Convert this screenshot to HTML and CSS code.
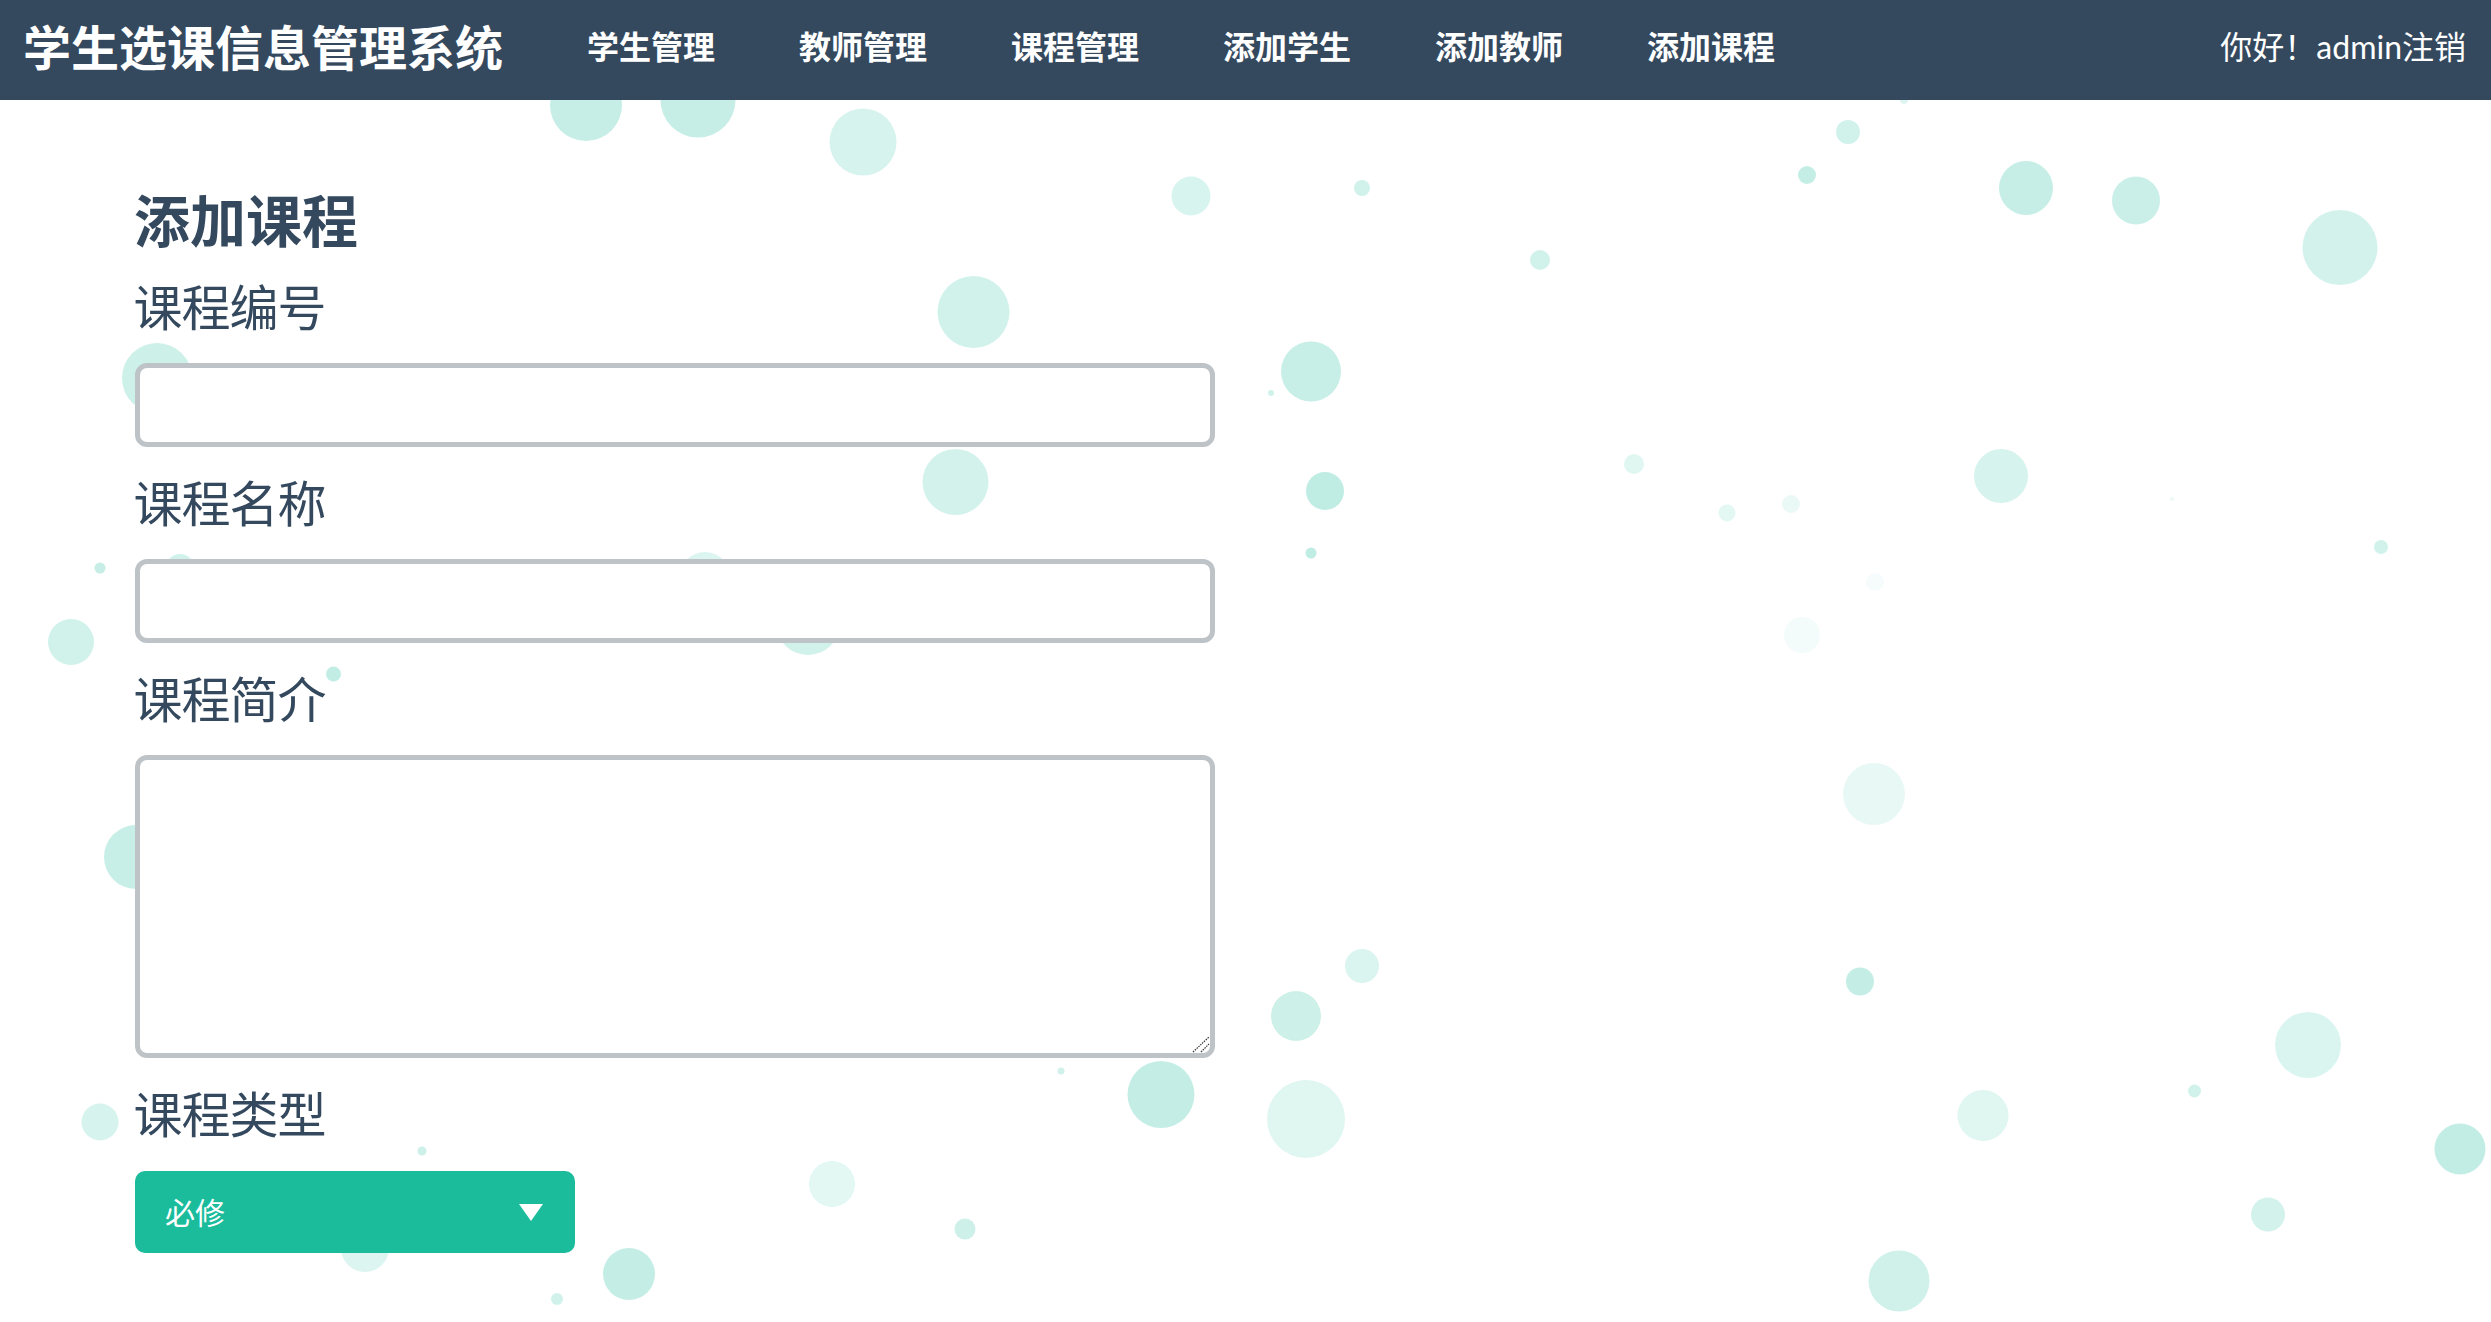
FILE: index.html
```html
<!DOCTYPE html>
<html lang="zh-CN">
<head>
<meta charset="utf-8">
<title>学生选课信息管理系统</title>
<link rel="stylesheet" href="styles.css">
</head>
<body>
<svg class="bubbles" viewBox="0 0 2491 1322" width="2491" height="1322" aria-hidden="true">
  <g fill="#1abc9c">
    <circle cx="586" cy="105" r="36" opacity=".25"/>
    <circle cx="698" cy="100" r="37.5" opacity=".25"/>
    <circle cx="863" cy="142" r="33.5" opacity=".18"/>
    <circle cx="973.5" cy="312" r="36" opacity=".2"/>
    <circle cx="157" cy="378" r="35" opacity=".22"/>
    <circle cx="955.5" cy="482" r="33" opacity=".19"/>
    <circle cx="100" cy="568" r="5.5" opacity=".25"/>
    <circle cx="180" cy="568" r="14" opacity=".2"/>
    <circle cx="705" cy="578" r="26" opacity=".15"/>
    <circle cx="71" cy="642" r="23" opacity=".2"/>
    <circle cx="808" cy="623" r="32" opacity=".2"/>
    <circle cx="333.5" cy="674" r="7.5" opacity=".27"/>
    <circle cx="136" cy="857" r="32" opacity=".24"/>
    <circle cx="100" cy="1122" r="18.5" opacity=".18"/>
    <circle cx="422" cy="1151" r="4.5" opacity=".22"/>
    <circle cx="832" cy="1184" r="23" opacity=".12"/>
    <circle cx="965" cy="1229" r="10.5" opacity=".22"/>
    <circle cx="365" cy="1248" r="24" opacity=".15"/>
    <circle cx="629" cy="1274" r="26" opacity=".26"/>
    <circle cx="557" cy="1299" r="6" opacity=".2"/>
    <circle cx="1191" cy="196" r="19.5" opacity=".17"/>
    <circle cx="1362" cy="188" r="8" opacity=".2"/>
    <circle cx="1540" cy="260" r="10" opacity=".2"/>
    <circle cx="1807" cy="175" r="9" opacity=".26"/>
    <circle cx="1848" cy="132" r="12" opacity=".2"/>
    <circle cx="1904" cy="100" r="4" opacity=".15"/>
    <circle cx="2026" cy="188" r="27" opacity=".25"/>
    <circle cx="2136" cy="200.5" r="24" opacity=".23"/>
    <circle cx="2340" cy="247.5" r="37.5" opacity=".19"/>
    <circle cx="1311" cy="371.5" r="30" opacity=".24"/>
    <circle cx="1271" cy="393" r="3" opacity=".2"/>
    <circle cx="1634" cy="464" r="10" opacity=".14"/>
    <circle cx="2001" cy="476" r="27" opacity=".18"/>
    <circle cx="2172" cy="499" r="2" opacity=".08"/>
    <circle cx="1727" cy="513" r="8.5" opacity=".12"/>
    <circle cx="1791" cy="504" r="9" opacity=".09"/>
    <circle cx="2381" cy="547" r="7" opacity=".2"/>
    <circle cx="1325" cy="491" r="19" opacity=".28"/>
    <circle cx="1311" cy="553" r="5.5" opacity=".28"/>
    <circle cx="1875" cy="582" r="9" opacity=".04"/>
    <circle cx="1802" cy="635" r="18" opacity=".05"/>
    <circle cx="1874" cy="794" r="31" opacity=".1"/>
    <circle cx="1860" cy="981.5" r="14" opacity=".26"/>
    <circle cx="1362" cy="966" r="17" opacity=".16"/>
    <circle cx="1296" cy="1016" r="25" opacity=".22"/>
    <circle cx="1161" cy="1094.5" r="33.5" opacity=".26"/>
    <circle cx="1306" cy="1119" r="39" opacity=".14"/>
    <circle cx="1061" cy="1071" r="3.5" opacity=".2"/>
    <circle cx="1983" cy="1115.5" r="25.5" opacity=".14"/>
    <circle cx="2308" cy="1045" r="33" opacity=".16"/>
    <circle cx="2194.5" cy="1091" r="6.5" opacity=".2"/>
    <circle cx="2460" cy="1149" r="25.5" opacity=".27"/>
    <circle cx="2268" cy="1214.5" r="17" opacity=".19"/>
    <circle cx="1899" cy="1281" r="30.5" opacity=".21"/>
  </g>
</svg>
<header class="navbar">
  <a class="brand" href="#">学生选课信息管理系统</a>
  <nav class="nav-links">
    <a href="#">学生管理</a>
    <a href="#">教师管理</a>
    <a href="#">课程管理</a>
    <a href="#">添加学生</a>
    <a href="#">添加教师</a>
    <a href="#">添加课程</a>
  </nav>
  <div class="user">你好！admin注销</div>
</header>
<main class="content">
  <h1 class="title">添加课程</h1>
  <form class="course-form">
    <label class="field-label" for="c-id">课程编号</label>
    <input class="field" id="c-id" type="text">
    <label class="field-label" for="c-name">课程名称</label>
    <input class="field" id="c-name" type="text">
    <label class="field-label" for="c-desc">课程简介</label>
    <div class="area-wrap">
      <textarea class="field field-area" id="c-desc"></textarea>
      <svg class="grip" viewBox="0 0 18 17" width="18" height="17" aria-hidden="true">
        <path d="M1 16 17 1M9 16 17 8" fill="none" stroke="#333" stroke-width="1.2" stroke-dasharray="1.5 1"/>
      </svg>
    </div>
    <label class="field-label field-label-last">课程类型</label>
    <button class="select-btn" type="button"><span class="select-text">必修</span><span class="caret"></span></button>
  </form>
</main>
</body>
</html>
```
FILE: styles.css
```css
* { box-sizing: border-box; }
html, body { margin: 0; padding: 0; }
body {
  position: relative;
  width: 2491px;
  height: 1322px;
  overflow: hidden;
  background: #fff;
  color: #34495e;
  font-family: Lato, "Noto Sans CJK SC", sans-serif;
}
.bubbles { position: absolute; left: 0; top: 0; z-index: 0; }
.navbar {
  position: relative;
  z-index: 1;
  display: flex;
  align-items: center;
  height: 100px;
  padding: 0 25px 0 23px;
  background: #34495e;
  color: #fff;
}
.navbar a { color: #fff; text-decoration: none; }
.brand { font-size: 48px; font-weight: 700; line-height: 1; margin-top: -4px; }
.nav-links { display: flex; margin-left: 42px; margin-top: -6px; }
.nav-links a { padding: 0 42px; font-size: 32px; font-weight: 700; line-height: 1; }
.user { margin-left: auto; font-size: 32px; line-height: 1; margin-top: -6px; }
.content { position: relative; z-index: 1; padding: 91px 0 0 135px; }
.title { margin: 0 0 0 -1px; font-size: 56px; font-weight: 700; line-height: 60px; }
.course-form { display: flex; flex-direction: column; align-items: flex-start; }
.field-label { font-size: 49px; letter-spacing: -1px; line-height: 72px; margin: 20px 0 20px -1.5px; }
.field-label-last { margin-bottom: 21px; }
.field {
  display: block;
  width: 1080px;
  height: 84px;
  background: #fff;
  border: 5px solid #bdc3c7;
  border-radius: 12px;
  outline: none;
}
.area-wrap { position: relative; width: 1080px; }
.field-area { height: 303px; resize: none; }
.grip { position: absolute; right: 5px; bottom: 5px; }
.select-btn {
  display: flex;
  align-items: center;
  justify-content: space-between;
  width: 440px;
  height: 82px;
  padding: 0 32px 0 30px;
  border: 0;
  border-radius: 10px;
  background: #1abc9c;
  color: #fff;
  font: 30px Lato, "Noto Sans CJK SC", sans-serif;
}
.select-text { margin-top: -3px; }
.caret {
  width: 0;
  height: 0;
  border-left: 12px solid transparent;
  border-right: 12px solid transparent;
  border-top: 17px solid #fff;
}
```
